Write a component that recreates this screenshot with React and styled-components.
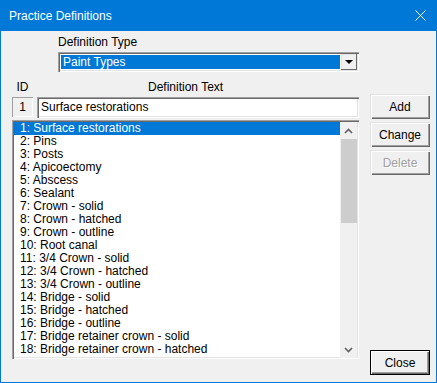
import React from 'react';
import styled, { createGlobalStyle } from 'styled-components';

const GlobalStyle = createGlobalStyle`
  html, body {
    margin: 0;
    padding: 0;
    background: #f0f0f0;
  }
  body {
    font-family: "Liberation Sans", Arial, sans-serif;
    font-size: 12px;
    color: #000;
  }
`;

const blue = '#0078d7';

const sunken = `
  box-shadow: inset 1px 1px 0 #a0a0a0, inset 2px 2px 0 #696969,
    inset -1px -1px 0 #ffffff, inset -2px -2px 0 #e3e3e3;
`;

const Window = styled.div`
  width: 437px;
  height: 383px;
  box-sizing: border-box;
  border: 1px solid ${blue};
  border-top: none;
  display: flex;
  flex-direction: column;
  background: #f0f0f0;
`;

const TitleBar = styled.div`
  height: 31px;
  margin: 0 -1px;
  background: ${blue};
  display: flex;
  align-items: center;
  justify-content: space-between;
  padding: 0 11px 0 9px;
  color: #fff;
  font-family: "Liberation Sans", Arial, sans-serif;
  font-size: 12px;
  flex-shrink: 0;
`;

const Body = styled.div`
  flex: 1;
  display: flex;
  gap: 11px;
  padding: 0 0 7px 11px;
`;

const LeftCol = styled.div`
  width: 347px;
  display: flex;
  flex-direction: column;
`;

const RightCol = styled.div`
  width: 60px;
  display: flex;
  flex-direction: column;
  gap: 3px;
  padding-top: 63px;
`;

const TypeBlock = styled.div`
  margin-left: 46px;
  padding-top: 5px;
  display: flex;
  flex-direction: column;
  gap: 3px;
`;

const Label = styled.div`
  line-height: 13px;
  height: 13px;
`;

const Select = styled.div`
  width: 301px;
  height: 20px;
  box-sizing: border-box;
  padding: 2px;
  display: flex;
  background: #fff;
  ${sunken}
`;

const SelectValue = styled.div`
  flex: 1;
  margin: 1px;
  background: ${blue};
  color: #fff;
  line-height: 14px;
  padding-left: 2px;
`;

const DropButton = styled.div`
  width: 16px;
  background: #f0f0f0;
  display: flex;
  align-items: center;
  justify-content: center;
  box-shadow: inset -1px -1px 0 #696969, inset 1px 1px 0 #e3e3e3;
`;

const Arrow = styled.div`
  width: 0;
  height: 0;
  border-left: 4px solid transparent;
  border-right: 4px solid transparent;
  border-top: 4px solid #000;
`;

const HeaderRow = styled.div`
  display: flex;
  margin-top: 9px;
  height: 13px;
  line-height: 13px;
`;

const IdHeader = styled.div`
  width: 21px;
  text-align: center;
`;

const TextHeader = styled.div`
  margin-left: 115px;
`;

const FieldRow = styled.div`
  display: flex;
  gap: 4px;
  margin-top: 3px;
`;

const IdBox = styled.div`
  width: 21px;
  height: 20px;
  box-sizing: border-box;
  text-align: center;
  line-height: 20px;
  box-shadow: inset 1px 1px 0 #a0a0a0, inset -1px -1px 0 #ffffff;
`;

const TextBox = styled.div`
  flex: 1;
  height: 21px;
  box-sizing: border-box;
  background: #fff;
  padding-left: 4px;
  line-height: 21px;
  ${sunken}
`;

const ListBox = styled.div`
  margin-top: 2px;
  height: 239px;
  box-sizing: border-box;
  padding: 2px 2px 1px;
  background: #fff;
  display: flex;
  ${sunken}
`;

const Items = styled.div`
  flex: 1;
`;

const Item = styled.div`
  height: 13px;
  line-height: 13px;
  padding-left: 6px;
  white-space: nowrap;
  background: ${p => (p.$selected ? blue : 'transparent')};
  color: ${p => (p.$selected ? '#fff' : '#000')};
`;

const ScrollBar = styled.div`
  width: 17px;
  background: #f0f0f0;
  display: flex;
  flex-direction: column;
`;

const ScrollArrow = styled.div`
  height: 17px;
  display: flex;
  align-items: center;
  justify-content: center;
`;

const Thumb = styled.div`
  height: 84px;
  margin: 0 0 0 1px;
  background: #cdcdcd;
`;

const Track = styled.div`
  flex: 1;
`;

const Button = styled.div`
  height: 25px;
  box-sizing: border-box;
  display: flex;
  align-items: center;
  justify-content: center;
  background: #f0f0f0;
  box-shadow: inset 1px 1px 0 #e3e3e3, inset 2px 2px 0 #ffffff,
    inset -1px -1px 0 #696969, inset -2px -2px 0 #a0a0a0;
  color: ${p => (p.$disabled ? '#a0a0a0' : '#000')};
  text-shadow: ${p => (p.$disabled ? '1px 1px 0 #fff' : 'none')};
`;

const DefaultButton = styled(Button)`
  margin-top: auto;
  box-shadow: inset 0 0 0 1px #000, inset 2px 2px 0 #ffffff,
    inset -2px -2px 0 #696969, inset -3px -3px 0 #a0a0a0;
`;

const items = [
  'Surface restorations',
  'Pins',
  'Posts',
  'Apicoectomy',
  'Abscess',
  'Sealant',
  'Crown - solid',
  'Crown - hatched',
  'Crown - outline',
  'Root canal',
  '3/4 Crown - solid',
  '3/4 Crown - hatched',
  '3/4 Crown - outline',
  'Bridge - solid',
  'Bridge - hatched',
  'Bridge - outline',
  'Bridge retainer crown - solid',
  'Bridge retainer crown - hatched',
];

const Chevron = ({ up }) => (
  <svg width="9" height="6" viewBox="0 0 9 6">
    <path
      d={up ? 'M1 5 L4.5 1.5 L8 5' : 'M1 1 L4.5 4.5 L8 1'}
      fill="none"
      stroke="#606060"
      strokeWidth="1.6"
    />
  </svg>
);

const App = () => (
  <>
    <GlobalStyle />
    <Window>
      <TitleBar>
        <span>Practice Definitions</span>
        <svg width="11" height="11" viewBox="0 0 11 11">
          <path d="M0.5 0.5 L10.5 10.5 M10.5 0.5 L0.5 10.5" stroke="#fff" strokeWidth="1" />
        </svg>
      </TitleBar>
      <Body>
        <LeftCol>
          <TypeBlock>
            <Label>Definition Type</Label>
            <Select>
              <SelectValue>Paint Types</SelectValue>
              <DropButton>
                <Arrow />
              </DropButton>
            </Select>
          </TypeBlock>
          <HeaderRow>
            <IdHeader>ID</IdHeader>
            <TextHeader>Definition Text</TextHeader>
          </HeaderRow>
          <FieldRow>
            <IdBox>1</IdBox>
            <TextBox>Surface restorations</TextBox>
          </FieldRow>
          <ListBox>
            <Items>
              {items.map((t, i) => (
                <Item key={t} $selected={i === 0}>
                  {i + 1}: {t}
                </Item>
              ))}
            </Items>
            <ScrollBar>
              <ScrollArrow>
                <Chevron up />
              </ScrollArrow>
              <Thumb />
              <Track />
              <ScrollArrow>
                <Chevron />
              </ScrollArrow>
            </ScrollBar>
          </ListBox>
        </LeftCol>
        <RightCol>
          <Button>Add</Button>
          <Button>Change</Button>
          <Button $disabled>Delete</Button>
          <DefaultButton>Close</DefaultButton>
        </RightCol>
      </Body>
    </Window>
  </>
);

export default App;
